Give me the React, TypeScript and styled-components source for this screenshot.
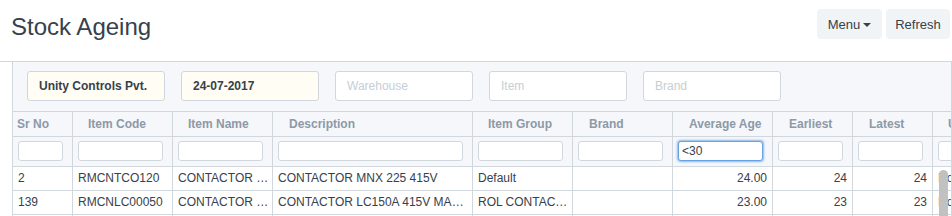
import React from "react";
import styled, { createGlobalStyle } from "styled-components";

const GlobalStyle = createGlobalStyle`
  html, body {
    margin: 0;
    padding: 0;
    overflow: hidden;
    background: #fff;
  }
  body {
    font-family: "Liberation Sans", Helvetica, Arial, sans-serif;
    color: #36414c;
  }
  * {
    box-sizing: border-box;
  }
`;

const PageHead = styled.div`
  display: flex;
  justify-content: space-between;
  align-items: flex-start;
  height: 62px;
  padding: 0 2px 0 11px;
  border-bottom: 1px solid #d1d8dd;
`;

const Title = styled.h1`
  margin: 15px 0 0;
  font-size: 24px;
  line-height: 24px;
  font-weight: normal;
  color: #36414c;
`;

const Actions = styled.div`
  display: flex;
  gap: 4px;
  margin-top: 9px;
`;

const HeadButton = styled.button`
  display: flex;
  align-items: center;
  justify-content: center;
  width: ${props => props.$width}px;
  height: 30px;
  padding: 0;
  border: none;
  border-radius: 4px;
  background: #f0f4f7;
  color: #36414c;
  font-family: inherit;
  font-size: 13px;
`;

const Caret = styled.span`
  display: inline-block;
  width: 0;
  height: 0;
  margin-left: 3px;
  margin-top: 1px;
  border-top: 4px solid #36414c;
  border-left: 4px solid transparent;
  border-right: 4px solid transparent;
`;

const Panel = styled.div`
  margin-left: 12px;
  height: 154px;
  border-left: 1px solid #d1d8dd;
  border-right: 1px solid #d1d8dd;
  background: #f5f7fa;
  overflow: hidden;
`;

const FilterBar = styled.div`
  display: flex;
  gap: 16px;
  padding: 9px 0 10px 14px;
`;

const FilterInput = styled.input`
  width: 138px;
  height: 30px;
  padding: 0 11px;
  border: 1px solid #d1d8dd;
  border-radius: 3px;
  background: ${props => (props.$filled ? "#fffdf4" : "#fff")};
  color: #36414c;
  font-family: inherit;
  font-size: 12px;
  font-weight: ${props => (props.$filled ? "bold" : "normal")};
  outline: none;

  &::placeholder {
    color: #c6ced5;
  }
`;

const Table = styled.div`
  width: max-content;
  border-top: 1px solid #d1d8dd;
`;

const Row = styled.div`
  display: grid;
  grid-template-columns: ${props => props.$cols};
  background: ${props => (props.$body ? "#fff" : "transparent")};
`;

const HeadCell = styled.div`
  height: 25px;
  padding-left: ${props => props.$pad}px;
  border-right: 1px solid #d1d8dd;
  border-bottom: 1px solid #d1d8dd;
  font-size: 12px;
  line-height: 24px;
  font-weight: bold;
  color: #8d99a6;
  white-space: nowrap;
  overflow: hidden;
`;

const FilterCell = styled.div`
  height: 30px;
  padding: 4px 0 0 5px;
  border-right: 1px solid #d1d8dd;
  border-bottom: 1px solid #d1d8dd;
`;

const CellInput = styled.input`
  display: block;
  width: calc(100% - 9px);
  height: 20px;
  padding: 0 3px;
  border: 1px solid ${props => (props.$focused ? "#66a3e0" : "#d1d8dd")};
  border-radius: 3px;
  background: #fff;
  box-shadow: ${props => (props.$focused ? "0 0 2px 1px rgba(102, 163, 224, 0.75)" : "none")};
  color: #36414c;
  font-family: inherit;
  font-size: 12px;
  outline: none;
`;

const Body = styled.div`
  position: relative;
`;

const Cell = styled.div`
  height: 24px;
  padding: 0 3px 0 5px;
  border-right: 1px solid #d1d8dd;
  border-bottom: 1px solid #d1d8dd;
  font-size: 12px;
  line-height: 23px;
  color: #36414c;
  text-align: ${props => props.$align};
  white-space: nowrap;
  overflow: hidden;
  text-overflow: ellipsis;
`;

const NumCell = styled(Cell)`
  padding: 0 5px;
`;

const ScrollThumb = styled.div`
  position: absolute;
  top: 3px;
  left: 926px;
  width: 9px;
  height: 120px;
  border-radius: 5px;
  background: #c1c1c1;
`;

const columns = [
  { key: "sr", label: "Sr No", width: 60, pad: 4, align: "left" },
  { key: "code", label: "Item Code", width: 100, pad: 15, align: "left" },
  { key: "name", label: "Item Name", width: 100, pad: 15, align: "left" },
  { key: "desc", label: "Description", width: 200, pad: 16, align: "left" },
  { key: "group", label: "Item Group", width: 100, pad: 15, align: "left" },
  { key: "brand", label: "Brand", width: 100, pad: 16, align: "left" },
  { key: "avg", label: "Average Age", width: 100, pad: 16, align: "right" },
  { key: "earliest", label: "Earliest", width: 80, pad: 16, align: "right" },
  { key: "latest", label: "Latest", width: 80, pad: 16, align: "right" },
  { key: "uom", label: "UOM", width: 80, pad: 15, align: "left" },
];

const rows = [
  {
    sr: "2",
    code: "RMCNTCO120",
    name: "CONTACTOR MNX 225 415V",
    desc: "CONTACTOR MNX 225 415V",
    group: "Default",
    brand: "",
    avg: "24.00",
    earliest: "24",
    latest: "24",
    uom: "Nos",
  },
  {
    sr: "139",
    code: "RMCNLC00050",
    name: "CONTACTOR LC150A 415V MAKE SCHNEIDER",
    desc: "CONTACTOR LC150A 415V MAKE SCHNEIDER",
    group: "ROL CONTACTOR",
    brand: "",
    avg: "23.00",
    earliest: "23",
    latest: "23",
    uom: "Nos",
  },
  {
    sr: "140",
    code: "RMCNLC00080",
    name: "CONTACTOR LC1D80 415V",
    desc: "CONTACTOR LC1D80 415V",
    group: "ROL CONTACTOR",
    brand: "",
    avg: "21.00",
    earliest: "21",
    latest: "21",
    uom: "Nos",
  },
];

const gridCols = columns.map(c => `${c.width}px`).join(" ");

export default function App() {
  return (
    <>
      <GlobalStyle />
      <PageHead>
        <Title>Stock Ageing</Title>
        <Actions>
          <HeadButton $width={65}>
            Menu
            <Caret />
          </HeadButton>
          <HeadButton $width={64}>Refresh</HeadButton>
        </Actions>
      </PageHead>
      <Panel>
        <FilterBar>
          <FilterInput $filled readOnly value="Unity Controls Pvt." />
          <FilterInput $filled readOnly value="24-07-2017" />
          <FilterInput placeholder="Warehouse" />
          <FilterInput placeholder="Item" />
          <FilterInput placeholder="Brand" />
        </FilterBar>
        <Table>
          <Row $cols={gridCols}>
            {columns.map(c => (
              <HeadCell key={c.key} $pad={c.pad}>
                {c.label}
              </HeadCell>
            ))}
          </Row>
          <Row $cols={gridCols}>
            {columns.map(c => (
              <FilterCell key={c.key}>
                <CellInput
                  readOnly
                  $focused={c.key === "avg"}
                  value={c.key === "avg" ? "<30" : ""}
                />
              </FilterCell>
            ))}
          </Row>
          <Body>
            {rows.map(r => (
              <Row $cols={gridCols} $body key={r.sr}>
                {columns.map(c =>
                  c.align === "right" ? (
                    <NumCell key={c.key} $align={c.align}>
                      {r[c.key]}
                    </NumCell>
                  ) : (
                    <Cell key={c.key} $align={c.align}>
                      {r[c.key]}
                    </Cell>
                  )
                )}
              </Row>
            ))}
            <ScrollThumb />
          </Body>
        </Table>
      </Panel>
    </>
  );
}
